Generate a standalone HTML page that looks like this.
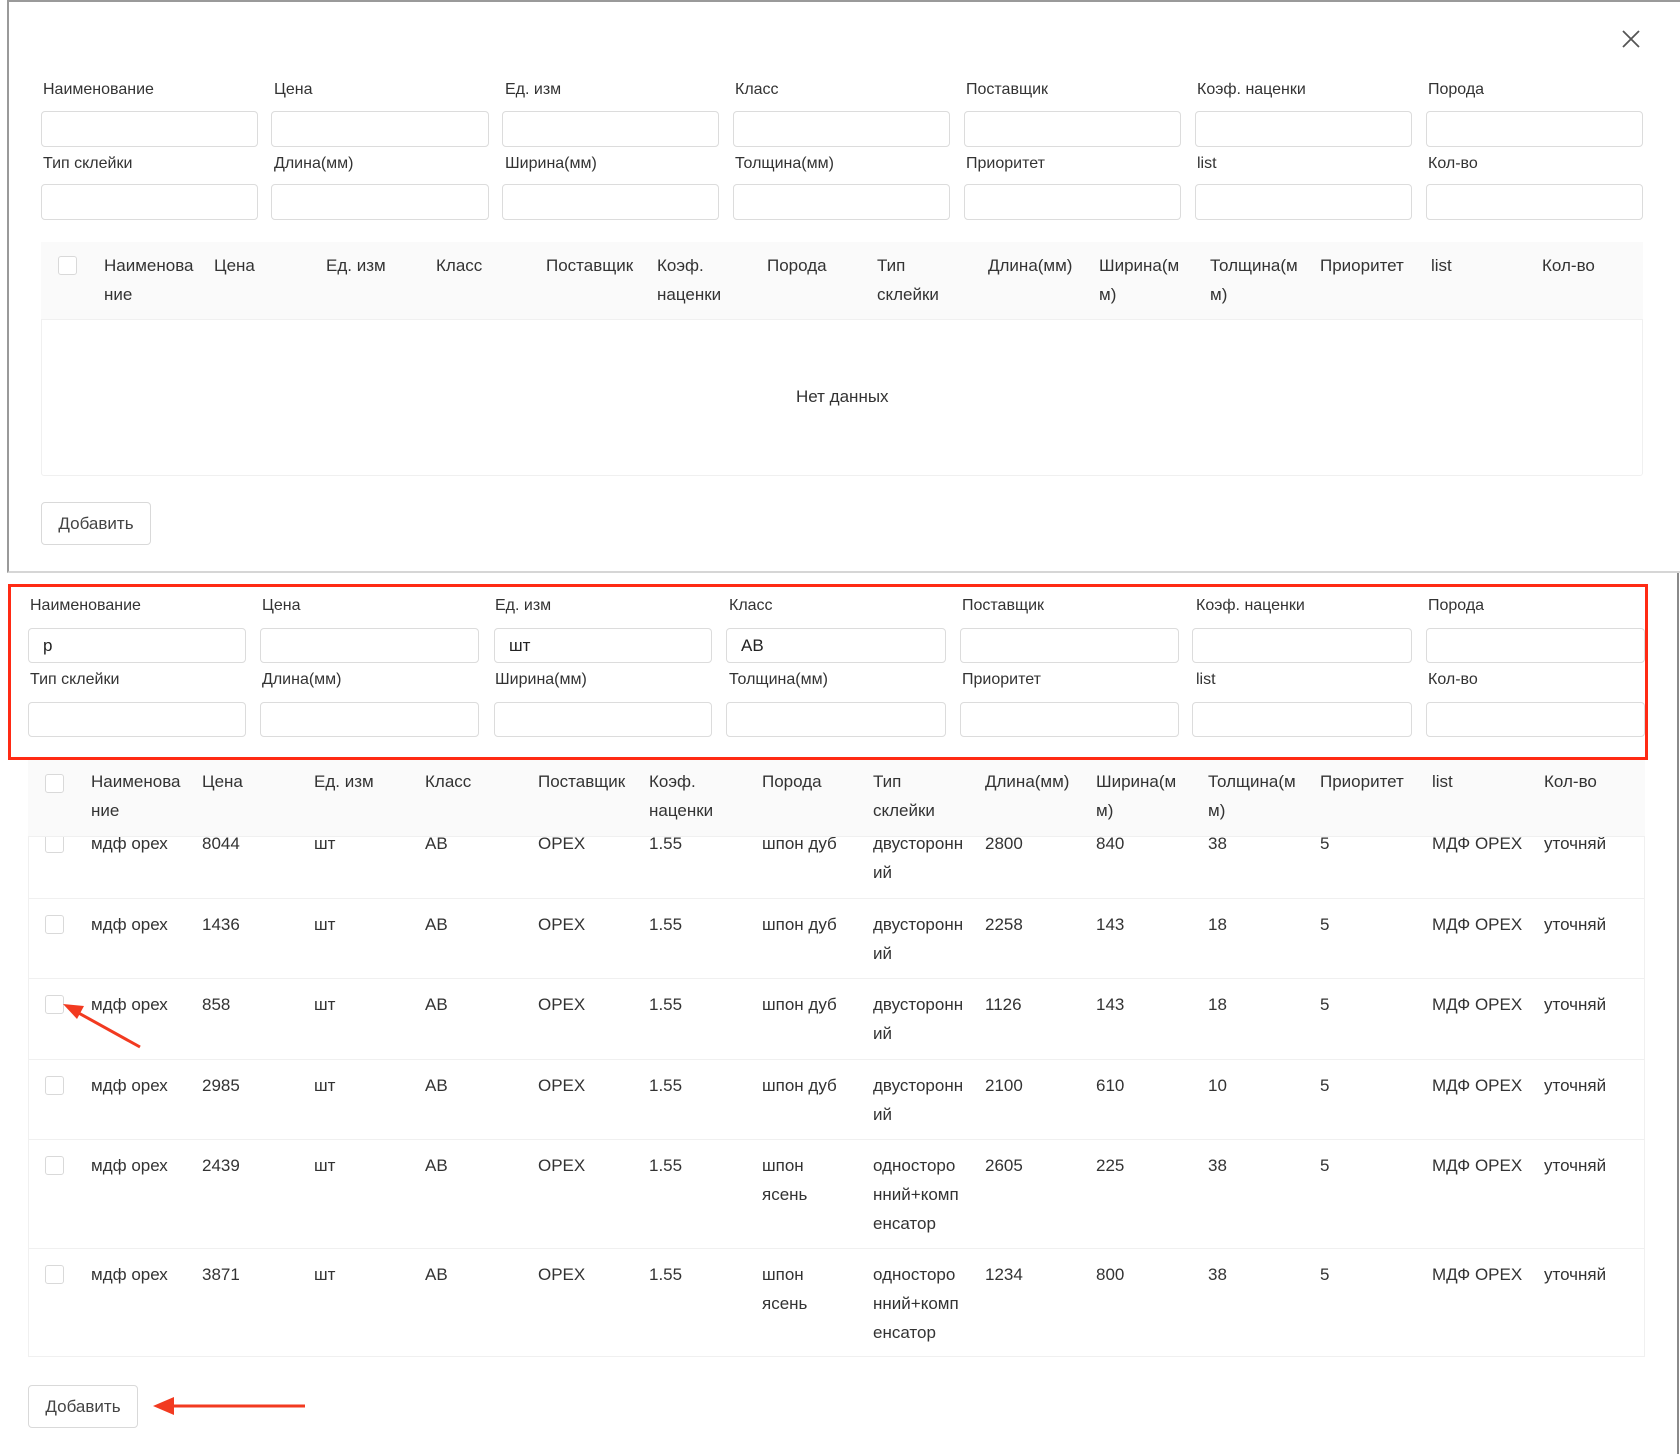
<!DOCTYPE html>
<html><head><meta charset="utf-8">
<style>
*{box-sizing:border-box;margin:0;padding:0}
html,body{width:1680px;height:1454px;background:#fff;overflow:hidden}
body{position:relative;font-family:"Liberation Sans",sans-serif;color:#333;font-size:16px}
.a{position:absolute}
.lbl{position:absolute;font-size:16px;line-height:20px;white-space:nowrap;color:#333}
.inp{position:absolute;border:1px solid #dcdcdc;border-radius:4px;background:#fff;font-size:17px;line-height:34px;padding-left:14px;color:#222}
.cell{position:absolute;font-size:17px;line-height:29px;white-space:nowrap;color:#333}
.cb{position:absolute;width:19px;height:19px;border:1px solid #d9d9d9;border-radius:3px;background:#fff}
.btn{position:absolute;border:1px solid #d9d9d9;border-radius:4px;background:#fff;font-size:17px;text-align:center;color:#444}
</style></head><body>

<!-- top modal -->
<div class="a" style="left:7px;top:0;width:1673px;height:573px;border-left:2px solid #9a9a9a;border-top:2px solid #9a9a9a;border-bottom:2px solid #d6d6d6;background:#fff"></div>
<svg class="a" style="left:1621px;top:29px" width="20" height="20" viewBox="0 0 20 20"><path d="M2 2L18 18M18 2L2 18" stroke="#555" stroke-width="1.8"/></svg>

<div class="lbl" style="left:43px;top:80px">Наименование</div>
<div class="lbl" style="left:274px;top:80px">Цена</div>
<div class="lbl" style="left:505px;top:80px">Ед. изм</div>
<div class="lbl" style="left:735px;top:80px">Класс</div>
<div class="lbl" style="left:966px;top:80px">Поставщик</div>
<div class="lbl" style="left:1197px;top:80px">Коэф. наценки</div>
<div class="lbl" style="left:1428px;top:80px">Порода</div>
<div class="inp" style="left:41px;top:111px;width:217px;height:36px"></div>
<div class="inp" style="left:271px;top:111px;width:218px;height:36px"></div>
<div class="inp" style="left:502px;top:111px;width:217px;height:36px"></div>
<div class="inp" style="left:733px;top:111px;width:217px;height:36px"></div>
<div class="inp" style="left:964px;top:111px;width:217px;height:36px"></div>
<div class="inp" style="left:1195px;top:111px;width:217px;height:36px"></div>
<div class="inp" style="left:1426px;top:111px;width:217px;height:36px"></div>

<div class="lbl" style="left:43px;top:154px">Тип склейки</div>
<div class="lbl" style="left:274px;top:154px">Длина(мм)</div>
<div class="lbl" style="left:505px;top:154px">Ширина(мм)</div>
<div class="lbl" style="left:735px;top:154px">Толщина(мм)</div>
<div class="lbl" style="left:966px;top:154px">Приоритет</div>
<div class="lbl" style="left:1197px;top:154px">list</div>
<div class="lbl" style="left:1428px;top:154px">Кол-во</div>
<div class="inp" style="left:41px;top:184px;width:217px;height:36px"></div>
<div class="inp" style="left:271px;top:184px;width:218px;height:36px"></div>
<div class="inp" style="left:502px;top:184px;width:217px;height:36px"></div>
<div class="inp" style="left:733px;top:184px;width:217px;height:36px"></div>
<div class="inp" style="left:964px;top:184px;width:217px;height:36px"></div>
<div class="inp" style="left:1195px;top:184px;width:217px;height:36px"></div>
<div class="inp" style="left:1426px;top:184px;width:217px;height:36px"></div>

<div class="a" style="left:41px;top:242px;width:1602px;height:234px;border:1px solid #f0f0f0;border-radius:3px"></div>
<div class="a" style="left:41px;top:242px;width:1602px;height:78px;background:#fafafa;border-bottom:1px solid #f0f0f0"></div>
<div class="cb" style="left:58px;top:256px"></div>
<div class="cell" style="left:104px;top:251px">Наименова<br>ние</div>
<div class="cell" style="left:214px;top:251px">Цена</div>
<div class="cell" style="left:326px;top:251px">Ед. изм</div>
<div class="cell" style="left:436px;top:251px">Класс</div>
<div class="cell" style="left:546px;top:251px">Поставщик</div>
<div class="cell" style="left:657px;top:251px">Коэф.<br>наценки</div>
<div class="cell" style="left:767px;top:251px">Порода</div>
<div class="cell" style="left:877px;top:251px">Тип<br>склейки</div>
<div class="cell" style="left:988px;top:251px">Длина(мм)</div>
<div class="cell" style="left:1099px;top:251px">Ширина(м<br>м)</div>
<div class="cell" style="left:1210px;top:251px">Толщина(м<br>м)</div>
<div class="cell" style="left:1320px;top:251px">Приоритет</div>
<div class="cell" style="left:1431px;top:251px">list</div>
<div class="cell" style="left:1542px;top:251px">Кол-во</div>
<div class="cell" style="left:796px;top:382px">Нет данных</div>
<div class="btn" style="left:41px;top:502px;width:110px;height:43px;line-height:41px">Добавить</div>

<div class="a" style="left:1677px;top:573px;width:2px;height:881px;background:#8a8a8a"></div>

<!-- lower table rows -->
<div class="a" style="left:28px;top:760px;width:1617px;height:597px;border-left:1px solid #f0f0f0;border-right:1px solid #f0f0f0;border-bottom:1px solid #f0f0f0"></div>
<div id="rows"></div>
<!-- rows -->
<div class="a" style="left:28px;top:898px;width:1617px;height:1px;background:#f0f0f0"></div>
<div class="a" style="left:28px;top:978px;width:1617px;height:1px;background:#f0f0f0"></div>
<div class="a" style="left:28px;top:1059px;width:1617px;height:1px;background:#f0f0f0"></div>
<div class="a" style="left:28px;top:1139px;width:1617px;height:1px;background:#f0f0f0"></div>
<div class="a" style="left:28px;top:1248px;width:1617px;height:1px;background:#f0f0f0"></div>

<!-- row 1 (top 817) -->
<div class="cb" style="left:45px;top:834px"></div>
<div class="cell" style="left:91px;top:829px">мдф орех</div><div class="cell" style="left:202px;top:829px">8044</div><div class="cell" style="left:314px;top:829px">шт</div><div class="cell" style="left:425px;top:829px">АВ</div><div class="cell" style="left:538px;top:829px">ОРЕХ</div><div class="cell" style="left:649px;top:829px">1.55</div><div class="cell" style="left:762px;top:829px">шпон дуб</div><div class="cell" style="left:873px;top:829px">двусторонн<br>ий</div><div class="cell" style="left:985px;top:829px">2800</div><div class="cell" style="left:1096px;top:829px">840</div><div class="cell" style="left:1208px;top:829px">38</div><div class="cell" style="left:1320px;top:829px">5</div><div class="cell" style="left:1432px;top:829px">МДФ ОРЕХ</div><div class="cell" style="left:1544px;top:829px">уточняй</div>
<!-- row 2 (898) -->
<div class="cb" style="left:45px;top:915px"></div>
<div class="cell" style="left:91px;top:910px">мдф орех</div><div class="cell" style="left:202px;top:910px">1436</div><div class="cell" style="left:314px;top:910px">шт</div><div class="cell" style="left:425px;top:910px">АВ</div><div class="cell" style="left:538px;top:910px">ОРЕХ</div><div class="cell" style="left:649px;top:910px">1.55</div><div class="cell" style="left:762px;top:910px">шпон дуб</div><div class="cell" style="left:873px;top:910px">двусторонн<br>ий</div><div class="cell" style="left:985px;top:910px">2258</div><div class="cell" style="left:1096px;top:910px">143</div><div class="cell" style="left:1208px;top:910px">18</div><div class="cell" style="left:1320px;top:910px">5</div><div class="cell" style="left:1432px;top:910px">МДФ ОРЕХ</div><div class="cell" style="left:1544px;top:910px">уточняй</div>
<!-- row 3 (978) -->
<div class="cb" style="left:45px;top:995px"></div>
<div class="cell" style="left:91px;top:990px">мдф орех</div><div class="cell" style="left:202px;top:990px">858</div><div class="cell" style="left:314px;top:990px">шт</div><div class="cell" style="left:425px;top:990px">АВ</div><div class="cell" style="left:538px;top:990px">ОРЕХ</div><div class="cell" style="left:649px;top:990px">1.55</div><div class="cell" style="left:762px;top:990px">шпон дуб</div><div class="cell" style="left:873px;top:990px">двусторонн<br>ий</div><div class="cell" style="left:985px;top:990px">1126</div><div class="cell" style="left:1096px;top:990px">143</div><div class="cell" style="left:1208px;top:990px">18</div><div class="cell" style="left:1320px;top:990px">5</div><div class="cell" style="left:1432px;top:990px">МДФ ОРЕХ</div><div class="cell" style="left:1544px;top:990px">уточняй</div>
<!-- row 4 (1059) -->
<div class="cb" style="left:45px;top:1076px"></div>
<div class="cell" style="left:91px;top:1071px">мдф орех</div><div class="cell" style="left:202px;top:1071px">2985</div><div class="cell" style="left:314px;top:1071px">шт</div><div class="cell" style="left:425px;top:1071px">АВ</div><div class="cell" style="left:538px;top:1071px">ОРЕХ</div><div class="cell" style="left:649px;top:1071px">1.55</div><div class="cell" style="left:762px;top:1071px">шпон дуб</div><div class="cell" style="left:873px;top:1071px">двусторонн<br>ий</div><div class="cell" style="left:985px;top:1071px">2100</div><div class="cell" style="left:1096px;top:1071px">610</div><div class="cell" style="left:1208px;top:1071px">10</div><div class="cell" style="left:1320px;top:1071px">5</div><div class="cell" style="left:1432px;top:1071px">МДФ ОРЕХ</div><div class="cell" style="left:1544px;top:1071px">уточняй</div>
<!-- row 5 (1139) -->
<div class="cb" style="left:45px;top:1156px"></div>
<div class="cell" style="left:91px;top:1151px">мдф орех</div><div class="cell" style="left:202px;top:1151px">2439</div><div class="cell" style="left:314px;top:1151px">шт</div><div class="cell" style="left:425px;top:1151px">АВ</div><div class="cell" style="left:538px;top:1151px">ОРЕХ</div><div class="cell" style="left:649px;top:1151px">1.55</div><div class="cell" style="left:762px;top:1151px">шпон<br>ясень</div><div class="cell" style="left:873px;top:1151px">односторо<br>нний+комп<br>енсатор</div><div class="cell" style="left:985px;top:1151px">2605</div><div class="cell" style="left:1096px;top:1151px">225</div><div class="cell" style="left:1208px;top:1151px">38</div><div class="cell" style="left:1320px;top:1151px">5</div><div class="cell" style="left:1432px;top:1151px">МДФ ОРЕХ</div><div class="cell" style="left:1544px;top:1151px">уточняй</div>
<!-- row 6 (1248) -->
<div class="cb" style="left:45px;top:1265px"></div>
<div class="cell" style="left:91px;top:1260px">мдф орех</div><div class="cell" style="left:202px;top:1260px">3871</div><div class="cell" style="left:314px;top:1260px">шт</div><div class="cell" style="left:425px;top:1260px">АВ</div><div class="cell" style="left:538px;top:1260px">ОРЕХ</div><div class="cell" style="left:649px;top:1260px">1.55</div><div class="cell" style="left:762px;top:1260px">шпон<br>ясень</div><div class="cell" style="left:873px;top:1260px">односторо<br>нний+комп<br>енсатор</div><div class="cell" style="left:985px;top:1260px">1234</div><div class="cell" style="left:1096px;top:1260px">800</div><div class="cell" style="left:1208px;top:1260px">38</div><div class="cell" style="left:1320px;top:1260px">5</div><div class="cell" style="left:1432px;top:1260px">МДФ ОРЕХ</div><div class="cell" style="left:1544px;top:1260px">уточняй</div>

<!-- lower header (overlaps row 1) -->
<div class="a" style="left:28px;top:760px;width:1617px;height:77px;background:#fafafa;border-bottom:1px solid #f0f0f0"></div>
<div class="cb" style="left:45px;top:774px"></div>
<div class="cell" style="left:91px;top:767px">Наименова<br>ние</div>
<div class="cell" style="left:202px;top:767px">Цена</div>
<div class="cell" style="left:314px;top:767px">Ед. изм</div>
<div class="cell" style="left:425px;top:767px">Класс</div>
<div class="cell" style="left:538px;top:767px">Поставщик</div>
<div class="cell" style="left:649px;top:767px">Коэф.<br>наценки</div>
<div class="cell" style="left:762px;top:767px">Порода</div>
<div class="cell" style="left:873px;top:767px">Тип<br>склейки</div>
<div class="cell" style="left:985px;top:767px">Длина(мм)</div>
<div class="cell" style="left:1096px;top:767px">Ширина(м<br>м)</div>
<div class="cell" style="left:1208px;top:767px">Толщина(м<br>м)</div>
<div class="cell" style="left:1320px;top:767px">Приоритет</div>
<div class="cell" style="left:1432px;top:767px">list</div>
<div class="cell" style="left:1544px;top:767px">Кол-во</div>

<!-- red box -->
<div class="a" style="left:8px;top:584px;width:1640px;height:176px;border:3px solid #ff2a14;background:#fff"></div>
<div class="lbl" style="left:30px;top:596px">Наименование</div>
<div class="lbl" style="left:262px;top:596px">Цена</div>
<div class="lbl" style="left:495px;top:596px">Ед. изм</div>
<div class="lbl" style="left:729px;top:596px">Класс</div>
<div class="lbl" style="left:962px;top:596px">Поставщик</div>
<div class="lbl" style="left:1196px;top:596px">Коэф. наценки</div>
<div class="lbl" style="left:1428px;top:596px">Порода</div>
<div class="inp" style="left:28px;top:628px;width:218px;height:35px">р</div>
<div class="inp" style="left:260px;top:628px;width:219px;height:35px"></div>
<div class="inp" style="left:494px;top:628px;width:218px;height:35px">шт</div>
<div class="inp" style="left:726px;top:628px;width:220px;height:35px">АВ</div>
<div class="inp" style="left:960px;top:628px;width:219px;height:35px"></div>
<div class="inp" style="left:1192px;top:628px;width:220px;height:35px"></div>
<div class="inp" style="left:1426px;top:628px;width:219px;height:35px"></div>
<div class="lbl" style="left:30px;top:670px">Тип склейки</div>
<div class="lbl" style="left:262px;top:670px">Длина(мм)</div>
<div class="lbl" style="left:495px;top:670px">Ширина(мм)</div>
<div class="lbl" style="left:729px;top:670px">Толщина(мм)</div>
<div class="lbl" style="left:962px;top:670px">Приоритет</div>
<div class="lbl" style="left:1196px;top:670px">list</div>
<div class="lbl" style="left:1428px;top:670px">Кол-во</div>
<div class="inp" style="left:28px;top:702px;width:218px;height:35px"></div>
<div class="inp" style="left:260px;top:702px;width:219px;height:35px"></div>
<div class="inp" style="left:494px;top:702px;width:218px;height:35px"></div>
<div class="inp" style="left:726px;top:702px;width:220px;height:35px"></div>
<div class="inp" style="left:960px;top:702px;width:219px;height:35px"></div>
<div class="inp" style="left:1192px;top:702px;width:220px;height:35px"></div>
<div class="inp" style="left:1426px;top:702px;width:219px;height:35px"></div>

<!-- bottom button -->
<div class="btn" style="left:28px;top:1385px;width:110px;height:43px;line-height:41px">Добавить</div>

<!-- arrows -->
<svg class="a" style="left:0;top:0" width="1680" height="1454" viewBox="0 0 1680 1454">
<path d="M140 1047L75 1011" stroke="#f23a20" stroke-width="3"/>
<path d="M63 1004L84 1006L77 1019Z" fill="#f23a20"/>
<path d="M305 1406L172 1406" stroke="#f23a20" stroke-width="3"/>
<path d="M153 1406L174 1397L174 1415Z" fill="#f23a20"/>
</svg>
</body></html>
